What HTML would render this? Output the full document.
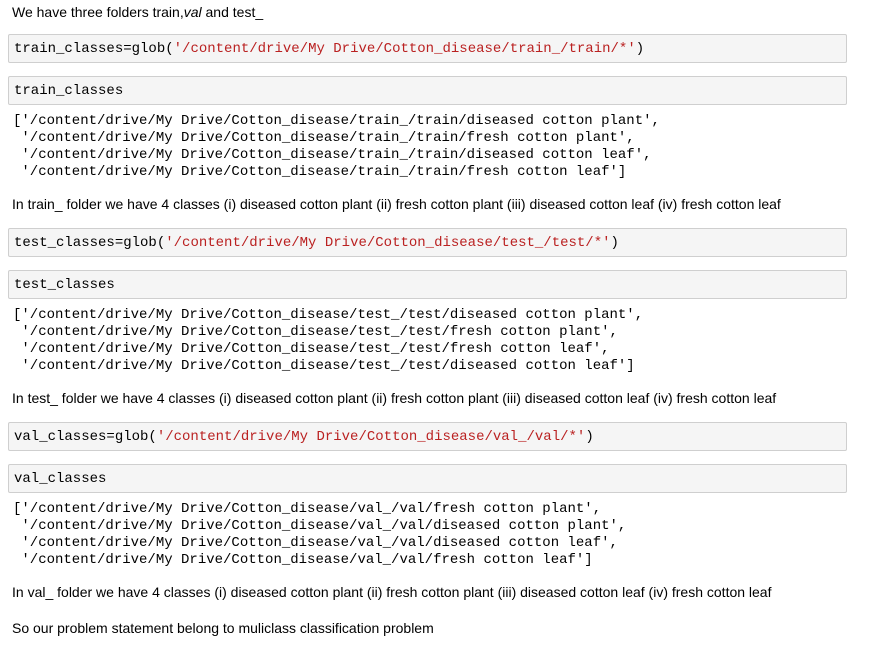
<!DOCTYPE html>
<html><head><style>
body{margin:0;width:885px;height:652px;background:#fff;position:relative;overflow:hidden}
.t{position:absolute;left:12px;font-family:"Liberation Sans",Arial,sans-serif;font-size:14px;color:#000;line-height:16px;white-space:nowrap}
.b{position:absolute;left:8px;width:837px;height:27px;background:#f5f5f5;border:1px solid #cfcfcf;border-radius:2px}
.b span.c{position:absolute;left:5px;top:6px}
.m{font-family:"Liberation Mono",monospace;font-size:14px;color:#000;white-space:pre;line-height:17px}
.o{position:absolute;left:13px}
.s{color:#ba2121}
</style></head><body>
<div class="t" style="top:4px">We have three folders train,<i>val</i> and test_</div>
<div class="b" style="top:34px"><span class="c m">train_classes=glob(<span class="s">'/content/drive/My Drive/Cotton_disease/train_/train/*'</span>)</span></div>
<div class="b" style="top:76px"><span class="c m">train_classes</span></div>
<div class="o m" style="top:113px">['/content/drive/My Drive/Cotton_disease/train_/train/diseased cotton plant',
 '/content/drive/My Drive/Cotton_disease/train_/train/fresh cotton plant',
 '/content/drive/My Drive/Cotton_disease/train_/train/diseased cotton leaf',
 '/content/drive/My Drive/Cotton_disease/train_/train/fresh cotton leaf']</div>
<div class="t" style="top:196px">In train_ folder we have 4 classes (i) diseased cotton plant (ii) fresh cotton plant (iii) diseased cotton leaf (iv) fresh cotton leaf</div>
<div class="b" style="top:228px"><span class="c m">test_classes=glob(<span class="s">'/content/drive/My Drive/Cotton_disease/test_/test/*'</span>)</span></div>
<div class="b" style="top:270px"><span class="c m">test_classes</span></div>
<div class="o m" style="top:307px">['/content/drive/My Drive/Cotton_disease/test_/test/diseased cotton plant',
 '/content/drive/My Drive/Cotton_disease/test_/test/fresh cotton plant',
 '/content/drive/My Drive/Cotton_disease/test_/test/fresh cotton leaf',
 '/content/drive/My Drive/Cotton_disease/test_/test/diseased cotton leaf']</div>
<div class="t" style="top:390px">In test_ folder we have 4 classes (i) diseased cotton plant (ii) fresh cotton plant (iii) diseased cotton leaf (iv) fresh cotton leaf</div>
<div class="b" style="top:422px"><span class="c m">val_classes=glob(<span class="s">'/content/drive/My Drive/Cotton_disease/val_/val/*'</span>)</span></div>
<div class="b" style="top:464px"><span class="c m">val_classes</span></div>
<div class="o m" style="top:501px">['/content/drive/My Drive/Cotton_disease/val_/val/fresh cotton plant',
 '/content/drive/My Drive/Cotton_disease/val_/val/diseased cotton plant',
 '/content/drive/My Drive/Cotton_disease/val_/val/diseased cotton leaf',
 '/content/drive/My Drive/Cotton_disease/val_/val/fresh cotton leaf']</div>
<div class="t" style="top:584px">In val_ folder we have 4 classes (i) diseased cotton plant (ii) fresh cotton plant (iii) diseased cotton leaf (iv) fresh cotton leaf</div>
<div class="t" style="top:620px">So our problem statement belong to muliclass classification problem</div>
</body></html>
